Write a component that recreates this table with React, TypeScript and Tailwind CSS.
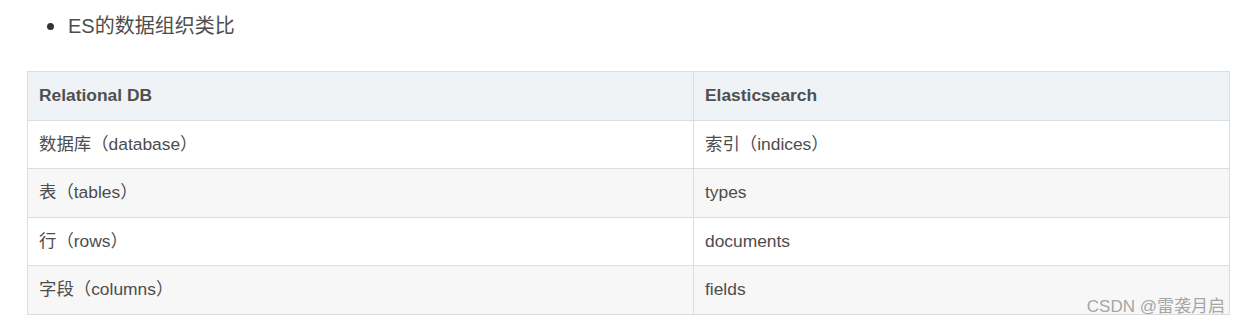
import React from "react";

const rows: [string, string][] = [
  ["数据库（database）", "索引（indices）"],
  ["表（tables）", "types"],
  ["行（rows）", "documents"],
  ["字段（columns）", "fields"],
];

export default function App() {
  return (
    <div
      className="relative w-[1240px] h-[326px] bg-white overflow-hidden text-[#4d4d4d]"
      style={{ fontFamily: '"Liberation Sans", Arial, "Noto Sans CJK SC", sans-serif' }}
    >
      <ul className="pt-[11px] pl-[47px] list-none">
        <li className="flex items-center h-[30px] text-[20px] leading-[30px]">
          <span className="w-[7px] h-[7px] rounded-full bg-[#333] mr-[14px]" />
          <span>ES的数据组织类比</span>
        </li>
      </ul>
      <table className="mt-[30px] ml-[27px] w-[1203px] border-collapse text-[17.4px] table-fixed">
        <colgroup>
          <col className="w-[666px]" />
          <col />
        </colgroup>
        <thead>
          <tr className="bg-[#eff3f5]">
            <th className="border border-[#dddddd] px-[11px] py-2 leading-[31.5px] text-left font-bold text-[#4f4f4f]">
              Relational DB
            </th>
            <th className="border border-[#dddddd] px-[11px] py-2 leading-[31.5px] text-left font-bold text-[#4f4f4f]">
              Elasticsearch
            </th>
          </tr>
        </thead>
        <tbody>
          {rows.map((r, i) => (
            <tr key={i} className={i % 2 === 0 ? "bg-white" : "bg-[#f7f7f7]"}>
              <td className="border border-[#dddddd] px-[11px] py-2 leading-[31.5px]">{r[0]}</td>
              <td className="border border-[#dddddd] px-[11px] py-2 leading-[31.5px]">{r[1]}</td>
            </tr>
          ))}
        </tbody>
      </table>
      <div className="absolute right-[15px] top-[297px] text-[17px] leading-[20px] text-[#a6a6a6]">
        CSDN @雷袭月启
      </div>
    </div>
  );
}
